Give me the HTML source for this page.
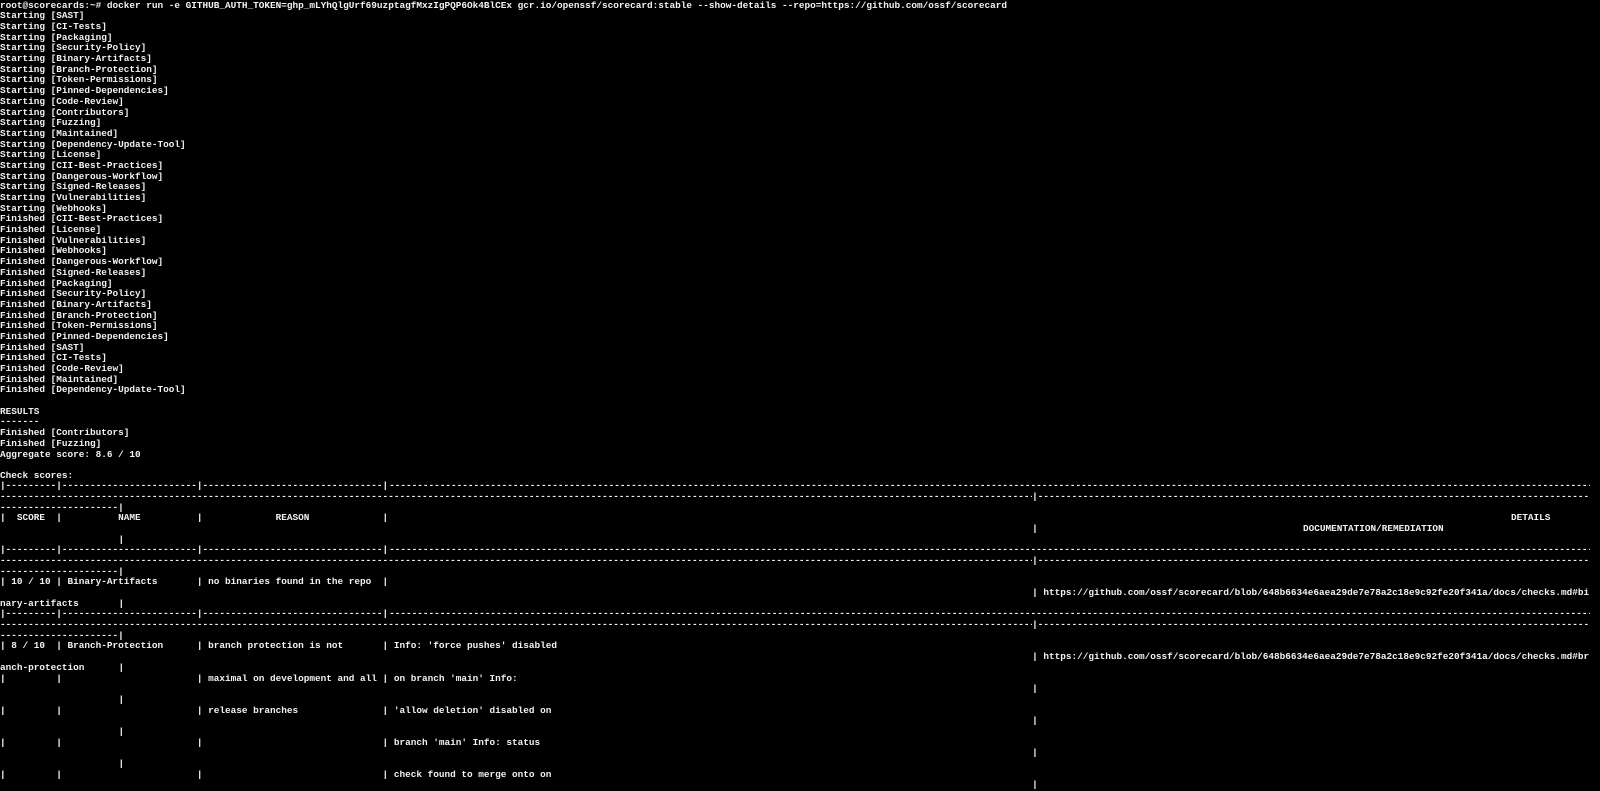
<!DOCTYPE html>
<html><head><meta charset="utf-8">
<style>
html,body{margin:0;padding:0;background:#000;}
body{width:1600px;height:786px;overflow:hidden;position:relative;
font-family:"Liberation Mono","DejaVu Sans Mono",monospace;font-size:9.4px;font-weight:bold;color:#f2f2f2;}
pre{margin:0;font:inherit;position:absolute;left:0;top:0.66px;line-height:10.68px;}
.l{position:absolute;white-space:pre;line-height:10.68px;height:10.68px;}
.d{position:absolute;white-space:pre;line-height:10.68px;height:10.68px;overflow:hidden;}
</style></head><body>
<pre>root@scorecards:~# docker run -e GITHUB_AUTH_TOKEN=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 gcr.io/openssf/scorecard:stable --show-details --repo=https://github.com/ossf/scorecard
Starting [SAST]
Starting [CI-Tests]
Starting [Packaging]
Starting [Security-Policy]
Starting [Binary-Artifacts]
Starting [Branch-Protection]
Starting [Token-Permissions]
Starting [Pinned-Dependencies]
Starting [Code-Review]
Starting [Contributors]
Starting [Fuzzing]
Starting [Maintained]
Starting [Dependency-Update-Tool]
Starting [License]
Starting [CII-Best-Practices]
Starting [Dangerous-Workflow]
Starting [Signed-Releases]
Starting [Vulnerabilities]
Starting [Webhooks]
Finished [CII-Best-Practices]
Finished [License]
Finished [Vulnerabilities]
Finished [Webhooks]
Finished [Dangerous-Workflow]
Finished [Signed-Releases]
Finished [Packaging]
Finished [Security-Policy]
Finished [Binary-Artifacts]
Finished [Branch-Protection]
Finished [Token-Permissions]
Finished [Pinned-Dependencies]
Finished [SAST]
Finished [CI-Tests]
Finished [Code-Review]
Finished [Maintained]
Finished [Dependency-Update-Tool]

RESULTS
-------
Finished [Contributors]
Finished [Fuzzing]
Aggregate score: 8.6 / 10

Check scores:</pre>

<div class="l" style="top:481.26px;left:0">|---------|------------------------|--------------------------------|</div>
<div class="d" style="top:481.26px;left:389.16px;width:1201.3px">----------------------------------------------------------------------------------------------------------------------------------------------------------------------------------------------------------------------------------------------------------------------------------------------------------------------------</div>
<div class="d" style="top:491.94px;left:0;width:1032.12px">----------------------------------------------------------------------------------------------------------------------------------------------------------------------------------------------------------------------------------------------------------------------------</div>
<div class="l" style="top:491.94px;left:1032.12px">|</div>
<div class="d" style="top:491.94px;left:1037.76px;width:552.7px">------------------------------------------------------------------------------------------------------------------</div>
<div class="l" style="top:502.62px;left:0">---------------------|</div>

<div class="l" style="top:513.30px;left:0">|  SCORE  |          NAME          |             REASON             |</div>
<div class="l" style="top:513.30px;left:1511px">DETAILS</div>
<div class="l" style="top:523.98px;left:1032.12px">|</div>
<div class="l" style="top:523.98px;left:1303px">DOCUMENTATION/REMEDIATION</div>
<div class="l" style="top:534.66px;left:118.44px">|</div>

<div class="l" style="top:545.34px;left:0">|---------|------------------------|--------------------------------|</div>
<div class="d" style="top:545.34px;left:389.16px;width:1201.3px">----------------------------------------------------------------------------------------------------------------------------------------------------------------------------------------------------------------------------------------------------------------------------------------------------------------------------</div>
<div class="d" style="top:556.02px;left:0;width:1032.12px">----------------------------------------------------------------------------------------------------------------------------------------------------------------------------------------------------------------------------------------------------------------------------</div>
<div class="l" style="top:556.02px;left:1032.12px">|</div>
<div class="d" style="top:556.02px;left:1037.76px;width:552.7px">------------------------------------------------------------------------------------------------------------------</div>
<div class="l" style="top:566.70px;left:0">---------------------|</div>

<div class="l" style="top:577.38px;left:0">| 10 / 10 | Binary-Artifacts       | no binaries found in the repo  |</div>
<div class="l" style="top:588.06px;left:1032.12px">| https://github.com/ossf/scorecard/blob/648b6634e6aea29de7e78a2c18e9c92fe20f341a/docs/checks.md#bi</div>
<div class="l" style="top:598.74px;left:0">nary-artifacts</div>
<div class="l" style="top:598.74px;left:118.44px">|</div>

<div class="l" style="top:609.42px;left:0">|---------|------------------------|--------------------------------|</div>
<div class="d" style="top:609.42px;left:389.16px;width:1201.3px">----------------------------------------------------------------------------------------------------------------------------------------------------------------------------------------------------------------------------------------------------------------------------------------------------------------------------</div>
<div class="d" style="top:620.10px;left:0;width:1032.12px">----------------------------------------------------------------------------------------------------------------------------------------------------------------------------------------------------------------------------------------------------------------------------</div>
<div class="l" style="top:620.10px;left:1032.12px">|</div>
<div class="d" style="top:620.10px;left:1037.76px;width:552.7px">------------------------------------------------------------------------------------------------------------------</div>
<div class="l" style="top:630.78px;left:0">---------------------|</div>

<div class="l" style="top:641.46px;left:0">| 8 / 10  | Branch-Protection      | branch protection is not       | Info: 'force pushes' disabled</div>
<div class="l" style="top:652.14px;left:1032.12px">| https://github.com/ossf/scorecard/blob/648b6634e6aea29de7e78a2c18e9c92fe20f341a/docs/checks.md#br</div>
<div class="l" style="top:662.82px;left:0">anch-protection</div>
<div class="l" style="top:662.82px;left:118.44px">|</div>

<div class="l" style="top:673.50px;left:0">|         |                        | maximal on development and all | on branch 'main' Info:</div>
<div class="l" style="top:684.18px;left:1032.12px">|</div>
<div class="l" style="top:694.86px;left:118.44px">|</div>

<div class="l" style="top:705.54px;left:0">|         |                        | release branches               | 'allow deletion' disabled on</div>
<div class="l" style="top:716.22px;left:1032.12px">|</div>
<div class="l" style="top:726.90px;left:118.44px">|</div>

<div class="l" style="top:737.58px;left:0">|         |                        |                                | branch 'main' Info: status</div>
<div class="l" style="top:748.26px;left:1032.12px">|</div>
<div class="l" style="top:758.94px;left:118.44px">|</div>

<div class="l" style="top:769.62px;left:0">|         |                        |                                | check found to merge onto on</div>
<div class="l" style="top:780.30px;left:1032.12px">|</div>
</body></html>
